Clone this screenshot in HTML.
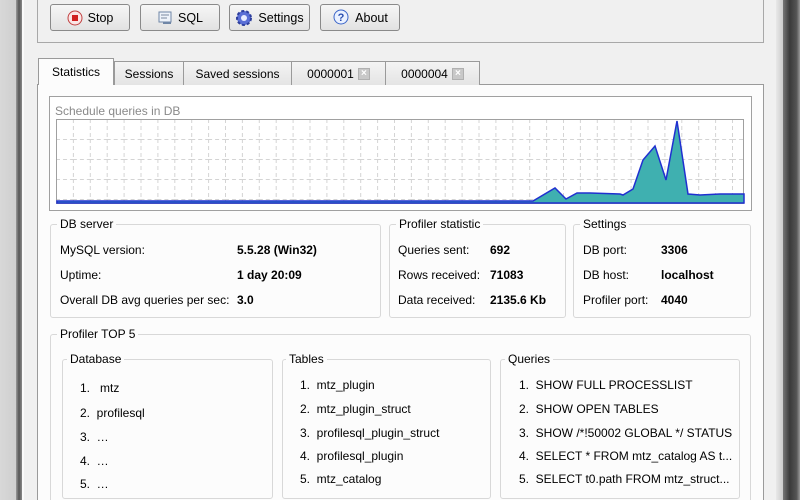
<!DOCTYPE html>
<html style="width:800px;height:500px;overflow:hidden"><head><meta charset="utf-8"><style>
*{box-sizing:border-box;margin:0;padding:0}
body{width:800px;height:500px;overflow:hidden;background:#f0f0f0;font-family:"Liberation Sans",Tahoma,sans-serif;font-size:12px;color:#000;position:relative}
.a{position:absolute}
.t{position:absolute;white-space:nowrap;line-height:14px}
.btn{position:absolute;top:4px;height:27px;border:1px solid #8a8a8a;border-radius:3px;background:linear-gradient(#f6f6f6,#e2e2e2);display:flex;align-items:center;justify-content:center;gap:5px;font-size:12.5px}
.tab{position:absolute;top:61px;height:24px;border:1px solid #9a9a9a;border-bottom:none;background:linear-gradient(#f4f4f4,#e4e4e4);display:flex;align-items:center;justify-content:center;gap:4px}
.x{display:inline-block;width:12px;height:12px;background:#c8c8c8;border:1px solid #b0b0b0;color:#fff;font-size:10px;line-height:10px;text-align:center;font-weight:bold}
.g{position:absolute;border:1px solid #d8d8d8;border-radius:3px}
.gt{position:absolute;top:-8px;left:6px;background:#fcfcfc;padding:0 3px;line-height:14px;white-space:nowrap}
b{font-weight:bold}
</style></head><body>
<div class="a" style="left:0;top:0;width:16px;height:500px;background:linear-gradient(90deg,#d8d8d8,#cfcfcf)"></div>
<div class="a" style="left:16px;top:0;width:6px;height:500px;background:linear-gradient(90deg,#9a9a9a,#555,#8a8a8a)"></div>
<div class="a" style="left:22px;top:0;width:2px;height:500px;background:#fafafa"></div>
<div class="a" style="left:776px;top:0;width:8px;height:500px;background:linear-gradient(90deg,#e8e8e8,#c8c8c8)"></div>
<div class="a" style="left:783px;top:0;width:17px;height:500px;background:linear-gradient(90deg,#777,#3a3a3a 40%,#555 80%,#999)"></div>
<div class="a" style="left:37px;top:-2px;width:727px;height:45px;border:1px solid #a8a8a8;border-top:none;background:#f0f0f0"></div>
<div class="btn" style="left:50px;width:80px"><svg width="16" height="16"><circle cx="8" cy="8" r="7" fill="#fbe6e6" stroke="#c04040"/><rect x="5" y="5" width="6" height="6" fill="#d02020"/></svg>Stop</div>
<div class="btn" style="left:140px;width:80px"><svg width="16" height="16"><rect x="2" y="2" width="12" height="10" fill="#eef3fa" stroke="#6f86a6"/><path d="M4 5h8M4 8h6" stroke="#7a8aa0"/><rect x="6" y="12" width="8" height="2" fill="#6f86a6"/></svg>SQL</div>
<div class="btn" style="left:229px;width:81px"><svg width="18" height="18"><circle cx="9" cy="9" r="7" fill="#5a6fd6" stroke="#2d3e9c" stroke-dasharray="3 2" stroke-width="2"/><circle cx="9" cy="9" r="3" fill="#e8ecff"/></svg>Settings</div>
<div class="btn" style="left:320px;width:80px"><svg width="18" height="18"><circle cx="9" cy="8" r="7" fill="#eaf1ff" stroke="#3a64c8"/><text x="9" y="12" font-size="11" font-weight="bold" text-anchor="middle" fill="#2a4fb0" font-family="Liberation Sans">?</text></svg>About</div>
<div class="a" style="left:37px;top:84px;width:727px;height:416px;border:1px solid #9a9a9a;border-bottom:none;background:#fcfcfc"></div>
<div class="tab" style="left:114px;width:70px">Sessions</div>
<div class="tab" style="left:183px;width:109px">Saved sessions</div>
<div class="tab" style="left:291px;width:95px">0000001 <span class="x">×</span></div>
<div class="tab" style="left:385px;width:95px">0000004 <span class="x">×</span></div>
<div class="tab" style="left:38px;top:58px;width:76px;height:27px;background:#fcfcfc;z-index:2">Statistics</div>
<div class="a" style="left:49px;top:96px;width:703px;height:115px;border:1px solid #a0a0a0;background:#fff"></div>
<div class="t" style="left:55px;top:104px;color:#8a8a8a">Schedule queries in DB</div>
<svg class="a" style="left:56px;top:119px" width="689" height="87">
<defs><pattern id="p" width="16.9" height="20" patternUnits="userSpaceOnUse"><path d="M0.5 0V20M0 0.5H17" stroke="#d4d4d4" stroke-dasharray="4 3" fill="none"/></pattern></defs>
<rect x="0.5" y="0.5" width="687" height="84" fill="url(#p)" stroke="#a0a0a0"/>
<polygon points="1,82 477,82 499,69 510,80 521,74 534,74 564,75 567,76 577,70 587,41 599,27 610,61 621,2 632,75 644,76 664,75 688,75 688,84 1,84" fill="#3fb0b0" stroke="#2030d0" stroke-width="1.5"/>
</svg>
<div class="g" style="left:50px;top:224px;width:331px;height:94px"><span class="gt">DB server</span></div>
<div class="t" style="left:60px;top:243px">MySQL version:</div><div class="t" style="left:237px;top:243px"><b>5.5.28 (Win32)</b></div>
<div class="t" style="left:60px;top:268px">Uptime:</div><div class="t" style="left:237px;top:268px"><b>1 day 20:09</b></div>
<div class="t" style="left:60px;top:293px">Overall DB avg queries per sec:</div><div class="t" style="left:237px;top:293px"><b>3.0</b></div>
<div class="g" style="left:389px;top:224px;width:177px;height:94px"><span class="gt">Profiler statistic</span></div>
<div class="t" style="left:398px;top:243px">Queries sent:</div><div class="t" style="left:490px;top:243px"><b>692</b></div>
<div class="t" style="left:398px;top:268px">Rows received:</div><div class="t" style="left:490px;top:268px"><b>71083</b></div>
<div class="t" style="left:398px;top:293px">Data received:</div><div class="t" style="left:490px;top:293px"><b>2135.6 Kb</b></div>
<div class="g" style="left:573px;top:224px;width:178px;height:94px"><span class="gt">Settings</span></div>
<div class="t" style="left:583px;top:243px">DB port:</div><div class="t" style="left:661px;top:243px"><b>3306</b></div>
<div class="t" style="left:583px;top:268px">DB host:</div><div class="t" style="left:661px;top:268px"><b>localhost</b></div>
<div class="t" style="left:583px;top:293px">Profiler port:</div><div class="t" style="left:661px;top:293px"><b>4040</b></div>
<div class="g" style="left:50px;top:334px;width:701px;height:180px"><span class="gt">Profiler TOP 5</span></div>
<div class="g" style="left:62px;top:359px;width:211px;height:140px"><span class="gt" style="left:4px">Database</span></div>
<div class="t" style="left:80px;top:381px">1.&nbsp;&nbsp; mtz</div>
<div class="t" style="left:80px;top:406px">2.&nbsp; profilesql</div>
<div class="t" style="left:80px;top:430px">3.&nbsp; …</div>
<div class="t" style="left:80px;top:454px">4.&nbsp; …</div>
<div class="t" style="left:80px;top:477px">5.&nbsp; …</div>
<div class="g" style="left:282px;top:359px;width:209px;height:140px"><span class="gt" style="left:3px">Tables</span></div>
<div class="t" style="left:300px;top:378px">1.&nbsp; mtz_plugin</div>
<div class="t" style="left:300px;top:402px">2.&nbsp; mtz_plugin_struct</div>
<div class="t" style="left:300px;top:426px">3.&nbsp; profilesql_plugin_struct</div>
<div class="t" style="left:300px;top:449px">4.&nbsp; profilesql_plugin</div>
<div class="t" style="left:300px;top:472px">5.&nbsp; mtz_catalog</div>
<div class="g" style="left:500px;top:359px;width:240px;height:140px"><span class="gt" style="left:4px">Queries</span></div>
<div class="t" style="left:519px;top:378px">1.&nbsp; SHOW FULL PROCESSLIST</div>
<div class="t" style="left:519px;top:402px">2.&nbsp; SHOW OPEN TABLES</div>
<div class="t" style="left:519px;top:426px">3.&nbsp; SHOW /*!50002 GLOBAL */ STATUS</div>
<div class="t" style="left:519px;top:449px">4.&nbsp; SELECT * FROM mtz_catalog AS t...</div>
<div class="t" style="left:519px;top:472px">5.&nbsp; SELECT t0.path FROM mtz_struct...</div>
</body></html>
